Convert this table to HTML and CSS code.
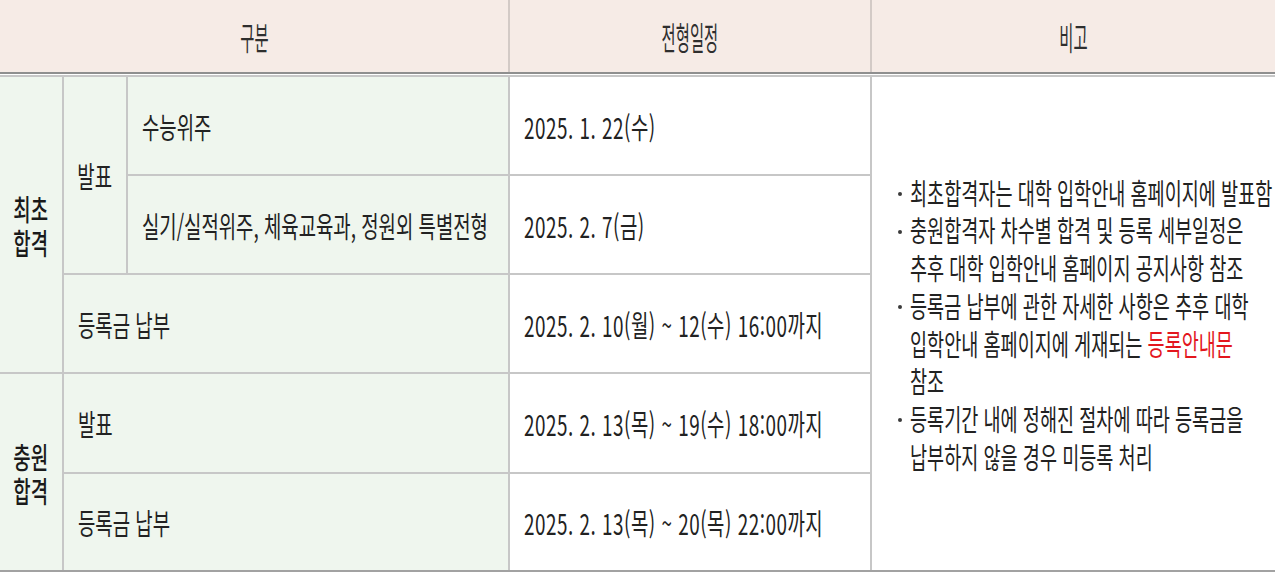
FILE: index.html
```html
<!DOCTYPE html>
<html lang="ko">
<head>
<meta charset="utf-8">
<title>전형일정</title>
<link rel="stylesheet" href="styles.css">
</head>
<body>
<div class="table">
  <div class="thead">
    <div class="th"><span class="ht">구분</span></div>
    <div class="th"><span class="ht">전형일정</span></div>
    <div class="th"><span class="ht">비고</span></div>
  </div>
  <div class="tbody">
    <div class="cell g mid fin"><div class="stack"><span class="t tc strong">최초</span><span class="t tc strong">합격</span></div></div>
    <div class="cell g mid ann"><span class="t tc">발표</span></div>
    <div class="cell g s1"><span class="t">수능위주</span></div>
    <div class="cell w d1"><span class="t dt">2025. 1. 22(수)</span></div>
    <div class="cell w note">
      <div class="notes">
        <div class="item"><span class="dot"><i></i></span><div class="lines"><div class="ln"><span class="t">최초합격자는 대학 입학안내 홈페이지에 발표함</span></div></div></div>
        <div class="item"><span class="dot"><i></i></span><div class="lines"><div class="ln"><span class="t">충원합격자 차수별 합격 및 등록 세부일정은</span></div><div class="ln"><span class="t">추후 대학 입학안내 홈페이지 공지사항 참조</span></div></div></div>
        <div class="item"><span class="dot"><i></i></span><div class="lines"><div class="ln"><span class="t">등록금 납부에 관한 자세한 사항은 추후 대학</span></div><div class="ln"><span class="t">입학안내 홈페이지에 게재되는 <em class="red">등록안내문</em></span></div><div class="ln"><span class="t">참조</span></div></div></div>
        <div class="item"><span class="dot"><i></i></span><div class="lines"><div class="ln"><span class="t">등록기간 내에 정해진 절차에 따라 등록금을</span></div><div class="ln"><span class="t">납부하지 않을 경우 미등록 처리</span></div></div></div>
      </div>
    </div>
    <div class="cell g s2"><span class="t">실기/실적위주, 체육교육과, 정원외 특별전형</span></div>
    <div class="cell w d2"><span class="t dt">2025. 2. 7(금)</span></div>
    <div class="cell g s3"><span class="t">등록금 납부</span></div>
    <div class="cell w d3"><span class="t dt">2025. 2. 10(월) ~ 12(수) 16:00까지</span></div>
    <div class="cell g mid add"><div class="stack"><span class="t tc strong">충원</span><span class="t tc strong">합격</span></div></div>
    <div class="cell g s4"><span class="t">발표</span></div>
    <div class="cell w d4"><span class="t dt">2025. 2. 13(목) ~ 19(수) 18:00까지</span></div>
    <div class="cell g s5"><span class="t">등록금 납부</span></div>
    <div class="cell w d5"><span class="t dt">2025. 2. 13(목) ~ 20(목) 22:00까지</span></div>
  </div>
</div>
</body>
</html>
```
FILE: styles.css
```css
html, body {
  margin: 0;
  padding: 0;
  background: #ffffff;
}
body {
  font-family: "Noto Sans CJK KR", "Noto Sans", sans-serif;
  color: #222222;
}
.table {
  width: 1275px;
}
.thead {
  display: grid;
  grid-template-columns: 508px 360px 403px;
  column-gap: 2px;
  height: 72px;
  background: #d3cac6;
  border-bottom: 2px solid #8f8f8f;
}
.th {
  background: #f6ebe6;
  display: flex;
  align-items: center;
  justify-content: center;
  overflow: hidden;
}
.ht {
  display: inline-block;
  font-size: 32px;
  line-height: 40px;
  color: #2e2e2e;
  transform: scaleX(0.48);
  transform-origin: 50% 50%;
  white-space: nowrap;
}
.tbody {
  margin-top: 1px;
  display: grid;
  grid-template-columns: 62px 62px 380px 360px 403px;
  grid-template-rows: 97px 97px 97px 98px 96px;
  gap: 2px;
  padding-top: 2px;
  background: #c7c7c7;
  border-bottom: 2px solid #a2a2a2;
}
.cell {
  display: flex;
  align-items: center;
  padding-left: 14px;
  min-width: 0;
  overflow: hidden;
}
.cell.mid {
  padding-left: 0;
  justify-content: center;
  text-align: center;
}
.g { background: #eff6ee; }
.w { background: #ffffff; }
.t {
  display: inline-block;
  font-size: 29px;
  line-height: 34px;
  white-space: nowrap;
  transform: scaleX(0.65);
  transform-origin: 0 50%;
}
.t.tc {
  transform-origin: 50% 50%;
}
.stack {
  display: flex;
  flex-direction: column;
  align-items: center;
  padding-top: 1px;
}
.t.strong {
  font-weight: 500;
  color: #1a1a1a;
}
.t.dt {
  letter-spacing: 0.8px;
}
.fin { grid-column: 1; grid-row: 1 / span 3; }
.ann { grid-column: 2; grid-row: 1 / span 2; }
.s1 { grid-column: 3; grid-row: 1; }
.d1 { grid-column: 4; grid-row: 1; }
.note { grid-column: 5; grid-row: 1 / span 5; padding-left: 0; }
.s2 { grid-column: 3; grid-row: 2; }
.d2 { grid-column: 4; grid-row: 2; }
.s3 { grid-column: 2 / span 2; grid-row: 3; }
.d3 { grid-column: 4; grid-row: 3; }
.add { grid-column: 1; grid-row: 4 / span 2; }
.s4 { grid-column: 2 / span 2; grid-row: 4; }
.d4 { grid-column: 4; grid-row: 4; }
.s5 { grid-column: 2 / span 2; grid-row: 5; }
.d5 { grid-column: 4; grid-row: 5; }
.notes {
  display: flex;
  flex-direction: column;
  width: 100%;
  padding-top: 2px;
}
.item {
  display: flex;
}
.dot {
  flex: 0 0 38px;
  height: 37.7px;
  display: flex;
  align-items: center;
}
.dot i {
  display: block;
  width: 4px;
  height: 4px;
  margin-left: 26px;
  margin-top: 3px;
  border-radius: 50%;
  background: #3a3a3a;
}
.lines {
  display: flex;
  flex-direction: column;
  min-width: 0;
}
.ln {
  height: 37.7px;
  display: flex;
  align-items: center;
}
.ln .t {
  line-height: 37.7px;
  transform: scaleX(0.64);
}
.red {
  font-style: normal;
  color: #e3161d;
}
```
